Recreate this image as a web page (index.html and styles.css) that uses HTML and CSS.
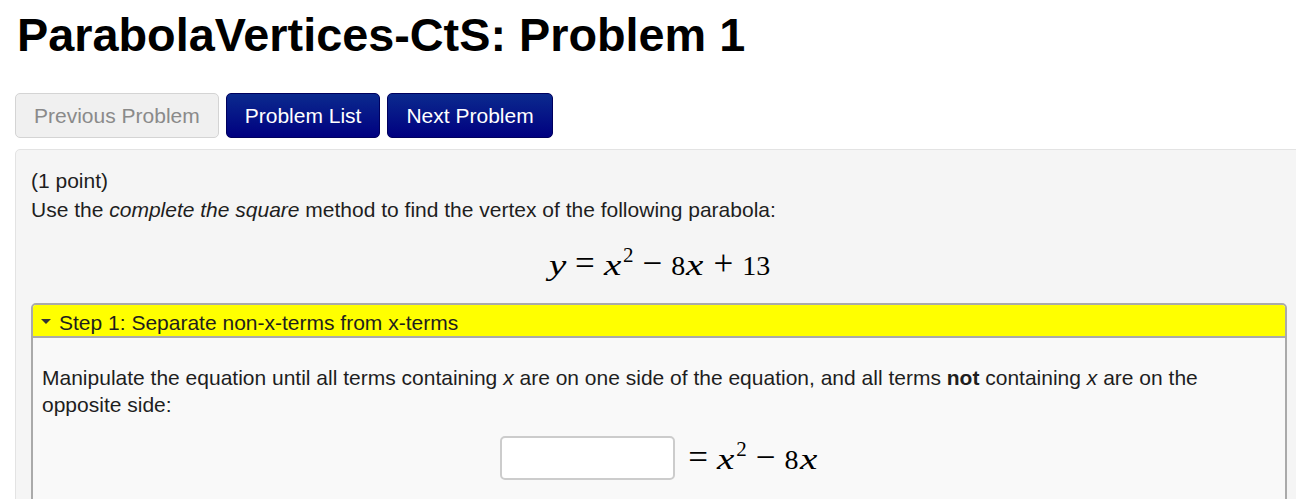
FILE: index.html
```html
<!DOCTYPE html>
<html>
<head>
<meta charset="utf-8">
<link rel="stylesheet" href="styles.css">
</head>
<body>
<h1 class="title">ParabolaVertices-CtS: Problem 1</h1>
<div class="nav">
  <span class="btn btn-disabled">Previous Problem</span>
  <span class="btn btn-primary">Problem List</span>
  <span class="btn btn-primary">Next Problem</span>
</div>
<div class="problem">
  <div class="line">(1 point)</div>
  <div class="line line-second">Use the <i>complete the square</i> method to find the vertex of the following parabola:</div>
  <div class="display-eq">
    <span class="mi">y</span><span class="rel">=</span><span class="mi">x</span><sup class="sup">2</sup><span class="bin">−</span><span class="mn">8</span><span class="mi">x</span><span class="bin">+</span><span class="mn">13</span>
  </div>
  <div class="step">
    <div class="step-head"><span class="caret"></span><span>Step 1: Separate non-x-terms from x-terms</span></div>
    <div class="step-body">
      <div class="para">Manipulate the equation until all terms containing <i>x</i> are on one side of the equation, and all terms <b>not</b> containing <i>x</i> are on the opposite side:</div>
      <div class="answer-row">
        <input class="answer" type="text">
        <span class="inline-eq"><span class="rel rel-first">=</span><span class="mi">x</span><sup class="sup">2</sup><span class="bin">−</span><span class="mn">8</span><span class="mi">x</span></span>
      </div>
    </div>
  </div>
</div>
</body>
</html>
```
FILE: styles.css
```css
html {
  overflow: hidden;
  background: #fff;
}
body {
  margin: 0;
  padding: 10px 0 0 15px;
  font-family: "Liberation Sans", Arial, sans-serif;
  font-size: 21px;
  line-height: 27px;
  color: #1e1e1e;
}
.title {
  margin: 0 0 32px 2px;
  font-size: 46.8px;
  line-height: 51px;
  font-weight: bold;
  color: #000;
}
.nav {
  display: flex;
  gap: 7px;
  height: 45px;
}
.btn {
  display: flex;
  align-items: center;
  box-sizing: border-box;
  height: 45px;
  padding: 0 18px;
  border-radius: 5px;
  font-size: 21px;
  white-space: nowrap;
}
.btn-disabled {
  background: #f0f0f0;
  border: 1px solid #d4d4d4;
  color: #8a8a8a;
}
.btn-primary {
  background: linear-gradient(#0b2a8e, #000080);
  border: 1px solid #00005e;
  color: #fff;
}
.problem {
  margin-top: 11px;
  box-sizing: border-box;
  width: 1288px;
  padding: 17px 15px 0 15px;
  background: #f5f5f5;
  border: 1px solid #e3e3e3;
  border-radius: 5px;
  height: 400px;
}
.line-second {
  margin-top: 2px;
}
.display-eq {
  margin: 23px 0 17px;
  text-align: center;
  font-family: "Liberation Serif", "Times New Roman", serif;
  font-size: 30px;
  line-height: 36px;
  color: #000;
}
.mi {
  display: inline-block;
  font-style: italic;
  transform: scaleX(1.3);
  margin: 0 3px;
}
.mn {
  font-size: 28px;
}
.sup {
  font-family: "Liberation Serif", "Times New Roman", serif;
  font-size: 21px;
  vertical-align: 0;
  position: relative;
  top: -13px;
  margin-left: 1px;
}
.rel {
  font-size: 35px;
  margin: 0 8px;
}
.bin {
  font-size: 35px;
  margin: 0 9px;
}
.step {
  border: 2px solid #aaa;
  border-radius: 5px;
  background: #f9f9f9;
  height: 300px;
}
.step-head {
  display: flex;
  align-items: center;
  gap: 8px;
  height: 27px;
  padding: 4px 8px 0;
  background: #ff0;
  border-bottom: 2px solid #aaa;
  border-radius: 3px 3px 0 0;
  color: #1e1e1e;
}
.caret {
  width: 0;
  height: 0;
  border-left: 5px solid transparent;
  border-right: 5px solid transparent;
  border-top: 5px solid #333;
  margin-top: -2px;
}
.step-body {
  padding: 26px 9px 0 9px;
}
.answer-row {
  display: flex;
  justify-content: center;
  align-items: center;
  margin-top: 18px;
  gap: 13px;
}
.answer {
  box-sizing: border-box;
  width: 175px;
  height: 44px;
  border: 2px solid #ccc;
  border-radius: 5px;
  background: #fff;
  margin: 0;
}
.inline-eq {
  font-family: "Liberation Serif", "Times New Roman", serif;
  font-size: 30px;
  line-height: 36px;
  color: #000;
  margin-top: 4px;
}
.rel-first {
  margin-left: 0;
}
```
